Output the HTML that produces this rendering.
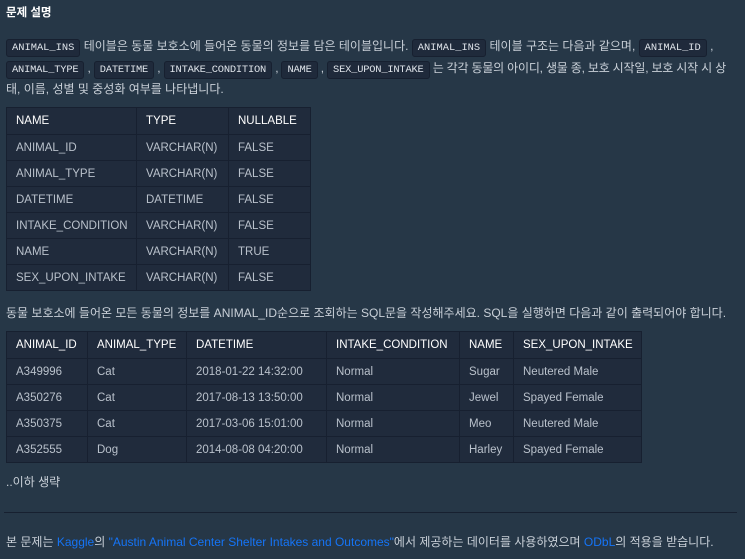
<!DOCTYPE html><html><head><meta charset="utf-8"><style>
body{margin:0;width:745px;height:559px;background:#263747;color:#c9d0d8;font-family:"Liberation Sans","Noto Sans CJK KR",sans-serif;font-size:12px;position:relative;overflow:hidden}
.a{position:absolute;left:6px;white-space:nowrap}
h1{position:absolute;left:6px;top:4px;margin:0;font-size:11.5px;color:#fff;font-weight:bold}
code{font-family:"Liberation Mono",monospace;font-size:10.4px;background:#1f2a3b;border:1px solid #172030;border-radius:3px;padding:2px 5px;color:#dfe4ea}
table{position:absolute;left:6px;border-collapse:collapse;background:#202b3c;font-size:11.5px;table-layout:fixed}
td,th{border:1px solid #172030;padding:0 9px;height:25px;text-align:left;white-space:nowrap;overflow:hidden}
th{color:#fff;font-weight:normal;height:26px}
td{color:#b9c1cb}
a{color:#1574f6;text-decoration:none}
hr{position:absolute;left:4px;width:733px;top:512px;margin:0;border:0;border-top:1px solid #172030}
</style></head><body>
<h1>문제 설명</h1>
<div class="a" style="top:37px"><code>ANIMAL_INS</code> 테이블은 동물 보호소에 들어온 동물의 정보를 담은 테이블입니다. <code>ANIMAL_INS</code> 테이블 구조는 다음과 같으며, <code>ANIMAL_ID</code> ,</div>
<div class="a" style="top:59px;letter-spacing:-0.2px"><code>ANIMAL_TYPE</code> , <code>DATETIME</code> , <code>INTAKE_CONDITION</code> , <code>NAME</code> , <code>SEX_UPON_INTAKE</code> 는 각각 동물의 아이디, 생물 종, 보호 시작일, 보호 시작 시 상</div>
<div class="a" style="top:80px">태, 이름, 성별 및 중성화 여부를 나타냅니다.</div>
<table style="top:107px;width:304px"><col style="width:130px"><col style="width:92px"><col style="width:82px">
<tr><th>NAME</th><th>TYPE</th><th>NULLABLE</th></tr>
<tr><td>ANIMAL_ID</td><td>VARCHAR(N)</td><td>FALSE</td></tr>
<tr><td>ANIMAL_TYPE</td><td>VARCHAR(N)</td><td>FALSE</td></tr>
<tr><td>DATETIME</td><td>DATETIME</td><td>FALSE</td></tr>
<tr><td>INTAKE_CONDITION</td><td>VARCHAR(N)</td><td>FALSE</td></tr>
<tr><td>NAME</td><td>VARCHAR(N)</td><td>TRUE</td></tr>
<tr><td>SEX_UPON_INTAKE</td><td>VARCHAR(N)</td><td>FALSE</td></tr></table>
<div class="a" style="top:304px">동물 보호소에 들어온 모든 동물의 정보를 ANIMAL_ID순으로 조회하는 SQL문을 작성해주세요. SQL을 실행하면 다음과 같이 출력되어야 합니다.</div>
<table style="top:331px;width:635px"><col style="width:81px"><col style="width:99px"><col style="width:140px"><col style="width:133px"><col style="width:54px"><col style="width:128px">
<tr><th>ANIMAL_ID</th><th>ANIMAL_TYPE</th><th>DATETIME</th><th>INTAKE_CONDITION</th><th>NAME</th><th>SEX_UPON_INTAKE</th></tr>
<tr><td>A349996</td><td>Cat</td><td>2018-01-22 14:32:00</td><td>Normal</td><td>Sugar</td><td>Neutered Male</td></tr>
<tr><td>A350276</td><td>Cat</td><td>2017-08-13 13:50:00</td><td>Normal</td><td>Jewel</td><td>Spayed Female</td></tr>
<tr><td>A350375</td><td>Cat</td><td>2017-03-06 15:01:00</td><td>Normal</td><td>Meo</td><td>Neutered Male</td></tr>
<tr><td>A352555</td><td>Dog</td><td>2014-08-08 04:20:00</td><td>Normal</td><td>Harley</td><td>Spayed Female</td></tr></table>
<div class="a" style="top:473px">..이하 생략</div>
<hr>
<div class="a" style="top:533px">본 문제는 <a>Kaggle</a>의 <a>"Austin Animal Center Shelter Intakes and Outcomes"</a>에서 제공하는 데이터를 사용하였으며 <a>ODbL</a>의 적용을 받습니다.</div>
</body></html>
